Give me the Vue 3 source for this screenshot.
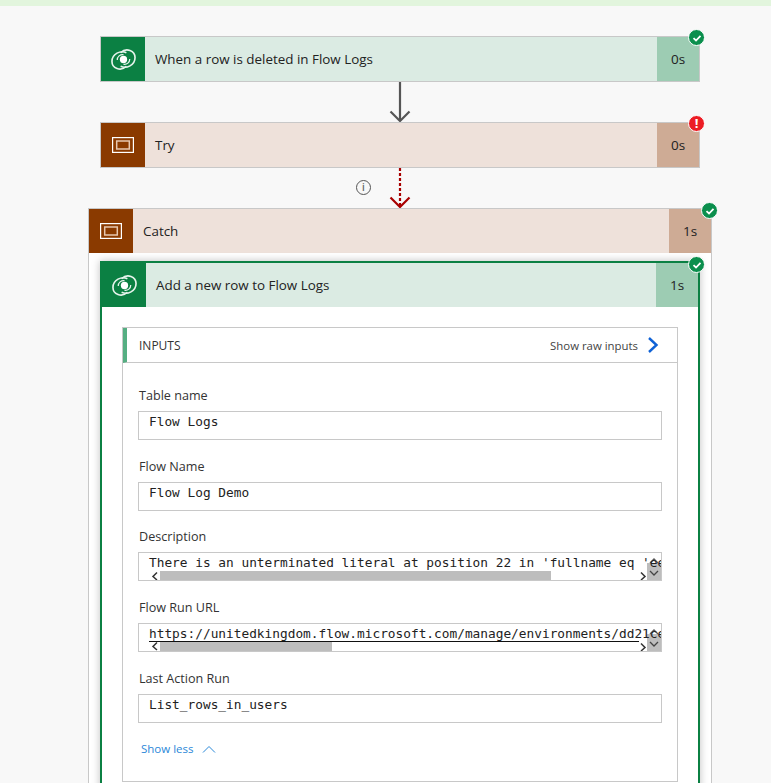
<script setup>
const fields = [
  { label: 'Table name', value: 'Flow Logs' },
  { label: 'Flow Name', value: 'Flow Log Demo' },
  { label: 'Description', value: "There is an unterminated literal at position 22 in 'fullname eq 'ee", thumb: 391 },
  { label: 'Flow Run URL', value: 'https://unitedkingdom.flow.microsoft.com/manage/environments/dd21ce', thumb: 172, link: true },
  { label: 'Last Action Run', value: 'List_rows_in_users' },
]
</script>

<template>
  <div class="page">
    <div class="topbar"></div>
    <div class="canvas">
      <div class="card">
        <div class="icon green-bg">
          <svg width="27" height="25" viewBox="0 0 28 26" fill="none" stroke="#e6f3ec" stroke-width="1.700">
            <path d="M17 6C11 3 2 7 2 15C2 22 11 26 17 20" />
            <path d="M11 20C17 23 26 19 26 11C26 4 17 0 11 6" />
            <path d="M7.500 13.500C7.500 10 10.500 7.500 14 8" stroke-width="1.300" />
            <path d="M20.500 12.500C20.500 16 17.500 18.500 14 18" stroke-width="1.300" />
            <circle cx="14" cy="13" r="3.800" fill="#fff" stroke="none" />
          </svg>
        </div>
        <div class="title green-light">When a row is deleted in Flow Logs</div>
        <div class="dur green-mid">0s</div>
        <span class="badge ok">
          <svg width="10" height="10" viewBox="0 0 10 10" fill="none" stroke="#fff" stroke-width="1.800"><path d="M1.500 5.200 4 7.500 8.500 2.800" /></svg>
        </span>
      </div>

      <div class="connector">
        <svg width="24" height="40" viewBox="0 0 24 40" fill="none" stroke="#555" stroke-width="2.200"><path d="M12 0V39" /><path d="M2.500 29.500 12 39 21.500 29.500" /></svg>
      </div>

      <div class="card">
        <div class="icon brown-bg">
          <svg width="22" height="16" viewBox="0 0 22 16" fill="none" stroke="#fff" stroke-width="1.200"><rect x=".6" y=".6" width="20.800" height="14.800" /><rect x="4.700" y="4" width="12.600" height="8" stroke="#e6c8b0" stroke-width="1.500" /></svg>
        </div>
        <div class="title brown-light">Try</div>
        <div class="dur brown-mid">0s</div>
        <span class="badge err">!</span>
      </div>

      <div class="connector">
        <span class="info">i</span>
        <svg width="24" height="40" viewBox="0 0 24 40" fill="none" stroke="#a80000" stroke-width="2.200"><path d="M12 0V39" stroke-dasharray="3 2" /><path d="M2.500 29.500 12 39 21.500 29.500" /></svg>
      </div>

      <div class="catch">
        <div class="catch-head">
          <div class="icon brown-bg">
            <svg width="22" height="16" viewBox="0 0 22 16" fill="none" stroke="#fff" stroke-width="1.200"><rect x=".6" y=".6" width="20.800" height="14.800" /><rect x="4.700" y="4" width="12.600" height="8" stroke="#e6c8b0" stroke-width="1.500" /></svg>
          </div>
          <div class="title brown-light">Catch</div>
          <div class="dur brown-mid">1s</div>
        </div>
        <span class="badge ok catch-badge">
          <svg width="10" height="10" viewBox="0 0 10 10" fill="none" stroke="#fff" stroke-width="1.800"><path d="M1.500 5.200 4 7.500 8.500 2.800" /></svg>
        </span>

        <div class="inner">
          <div class="inner-head">
            <div class="icon green-bg">
              <svg width="27" height="25" viewBox="0 0 28 26" fill="none" stroke="#e6f3ec" stroke-width="1.700">
                <path d="M17 6C11 3 2 7 2 15C2 22 11 26 17 20" />
                <path d="M11 20C17 23 26 19 26 11C26 4 17 0 11 6" />
                <path d="M7.500 13.500C7.500 10 10.500 7.500 14 8" stroke-width="1.300" />
                <path d="M20.500 12.500C20.500 16 17.500 18.500 14 18" stroke-width="1.300" />
                <circle cx="14" cy="13" r="3.800" fill="#fff" stroke="none" />
              </svg>
            </div>
            <div class="title green-light">Add a new row to Flow Logs</div>
            <div class="dur green-mid">1s</div>
          </div>
          <span class="badge ok inner-badge">
            <svg width="10" height="10" viewBox="0 0 10 10" fill="none" stroke="#fff" stroke-width="1.800"><path d="M1.500 5.200 4 7.500 8.500 2.800" /></svg>
          </span>

          <div class="panel">
            <div class="panel-head">
              <span class="inputs">INPUTS</span>
              <span class="raw">Show raw inputs</span>
              <svg width="12" height="16" viewBox="0 0 12 16" fill="none" stroke="#0f62d6" stroke-width="2.400"><path d="M2 1 9.500 8 2 15" /></svg>
            </div>
            <div class="panel-body">
              <div v-for="f in fields" :key="f.label" class="field">
                <div class="label">{{ f.label }}</div>
                <div class="box">
                  <div class="value" :class="{ link: f.link }">{{ f.value }}</div>
                  <template v-if="f.thumb">
                    <div class="hscroll">
                      <svg width="10" height="10" viewBox="0 0 10 10" fill="none" stroke="#333" stroke-width="1.500"><path d="M7 1.500 3 5.500 7 9" /></svg>
                      <div class="thumb" :style="{ width: f.thumb + 'px' }"></div>
                    </div>
                    <svg class="rarrow" width="10" height="10" viewBox="0 0 10 10" fill="none" stroke="#333" stroke-width="1.500"><path d="M3 1.500 7 5.500 3 9" /></svg>
                    <div class="vscroll">
                      <svg class="up" width="12" height="7" viewBox="0 0 12 7" fill="none" stroke="#555" stroke-width="1.300"><path d="M2 6 6 2 10 6" /></svg>
                      <svg class="down" width="12" height="7" viewBox="0 0 12 7" fill="none" stroke="#444" stroke-width="1.300"><path d="M2 1 6 5 10 1" /></svg>
                    </div>
                  </template>
                </div>
              </div>
              <div class="less">
                <span>Show less</span>
                <svg width="14" height="8" viewBox="0 0 14 8" fill="none" stroke="#2b88d8" stroke-width="1"><path d="M1 7.500 7 1.500 13 7.500" /></svg>
              </div>
            </div>
          </div>
        </div>
      </div>
    </div>
  </div>
</template>

<style>
html, body { margin: 0; background: #f8f8f8; }
</style>

<style scoped>
.page { height: 783px; overflow: hidden; background: #f8f8f8; font-family: "Open Sans", "Noto Sans", sans-serif; color: #222; position: relative; }
.topbar { height: 6px; background: #e2f5dd; }
.canvas { width: 624px; margin: 30px 0 0 88px; display: flex; flex-direction: column; align-items: center; }
.card { width: 600px; height: 46px; box-sizing: border-box; border: 1px solid #c8c8c8; display: flex; position: relative; }
.icon { width: 44px; height: 44px; display: flex; align-items: center; justify-content: center; flex: none; }
.green-bg { background: #0b8043; }
.brown-bg { background: #8a3a00; }
.title { flex: 1; padding-left: 10px; font-size: 13.4px; line-height: 44px; }
.green-light { background: #dbebe3; }
.brown-light { background: #eee1da; }
.dur { width: 42px; flex: none; text-align: center; font-size: 13.5px; line-height: 44px; }
.green-mid { background: #9dccb3; }
.brown-mid { background: #ceab95; }
.badge { position: absolute; top: -8px; right: -6px; width: 15px; height: 15px; border: 1px solid #fff; border-radius: 50%; display: flex; align-items: center; justify-content: center; color: #fff; font-size: 13px; font-weight: 700; line-height: 1; }
.ok { background: #0b8f4d; }
.err { background: #ec1c24; }
.connector { height: 40px; width: 24px; position: relative; }
.connector svg { display: block; }
.info { position: absolute; left: -32px; top: 12px; width: 13px; height: 13px; border: 1px solid #555; border-radius: 50%; font-size: 10px; font-weight: 600; line-height: 13px; text-align: center; color: #666; }
.catch { width: 624px; box-sizing: border-box; border: 1px solid #c8c8c8; border-bottom: 0; background: #fff; position: relative; }
.catch-head { display: flex; height: 44px; }
.catch-badge { top: -7px; right: -7px; }
.inner { width: 600px; box-sizing: border-box; margin: 8px 0 0 11px; padding-bottom: 20px; border: 2px solid #0b8043; border-bottom: 0; background: #fff; position: relative; box-shadow: 0 0 8px rgba(0, 0, 0, .25); }
.inner-head { display: flex; height: 44px; }
.inner-badge { top: -7px; right: -7px; }
.panel { margin: 20px 20px 0; border: 1px solid #c8c8c8; }
.panel-head { height: 34px; border-bottom: 1px solid #c8c8c8; border-left: 4px solid #55ae82; display: flex; align-items: center; padding: 0 18px 0 12px; font-size: 12px; }
.inputs { flex: 1; color: #333; }
.raw { margin-right: 9px; font-size: 11.4px; color: #444; }
.panel-body { padding: 22px 15px 0; height: 418px; box-sizing: border-box; }
.field { margin-bottom: 15.67px; }
.label { font-size: 12.6px; line-height: 20px; padding: 1px 0 0 1px; margin-bottom: 5px; color: #333; }
.box { height: 29px; box-sizing: border-box; border: 1px solid #c8c8c8; background: #fff; position: relative; overflow: hidden; }
.value { position: relative; z-index: 1; font-family: "DejaVu Sans Mono", monospace; font-size: 12.8px; height: 18px; box-sizing: border-box; padding-top: 1px; line-height: 18px; white-space: nowrap; margin-left: 10px; color: #222; }
.value.link { border-bottom: 1px solid #111; width: 490px; }
.hscroll { position: absolute; left: 11px; bottom: 0; height: 9px; display: flex; align-items: center; }
.thumb { height: 9px; background: #bdbdbd; }
.rarrow { position: absolute; left: 499px; bottom: -1px; }
.vscroll { position: absolute; right: 0; bottom: 0; width: 14px; height: 17px; background: #bdbdbd; }
.up { position: absolute; left: 1px; top: -6px; }
.down { position: absolute; left: 1px; top: 7px; }
.less { display: flex; align-items: center; gap: 8px; margin-top: 17px; height: 18px; font-size: 11.5px; color: #2b88d8; padding-left: 3px; }
</style>
